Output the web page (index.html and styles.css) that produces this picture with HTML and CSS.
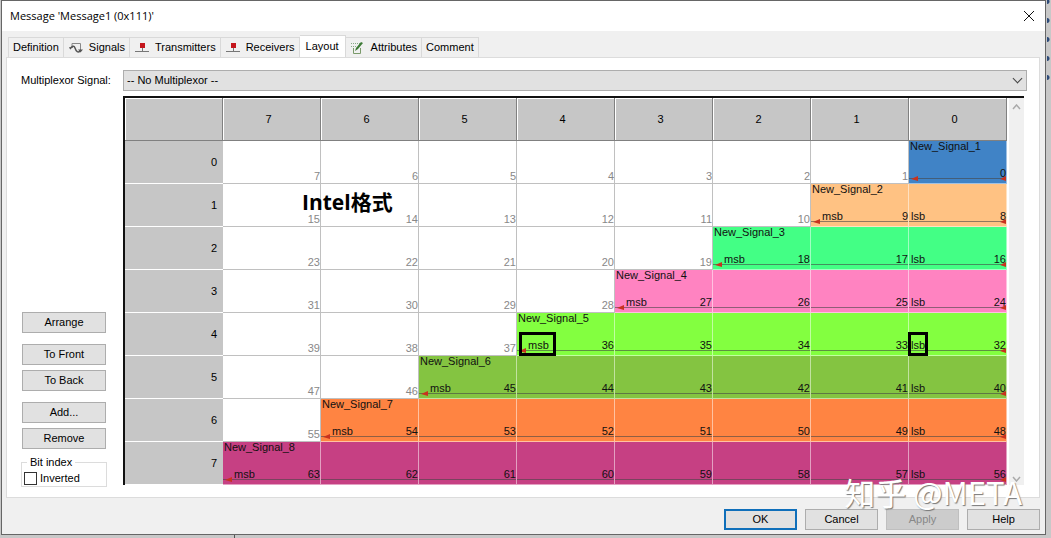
FILE: index.html
```html
<!DOCTYPE html>
<html lang="zh-CN">
  <head>
    <meta charset="utf-8">
    <meta name="viewport" content="width=device-width, initial-scale=1">
    <title>Message 'Message1 (0x111)'</title>
    <link rel="stylesheet" href="styles.css">
  </head>
  <body>
    <div class="dialog">
      <header class="title-bar">
        <h1>Message 'Message1 (0x111)'</h1>
        <button class="close" aria-label="Close">
          <svg width="12" height="12" viewBox="0 0 12 12"><path d="M1 1l10 10M11 1L1 11" stroke="#111" fill="none"/></svg>
        </button>
      </header>
      <nav class="tabs">
        <button class="tab">Definition</button>
        <button class="tab">
          <svg width="16" height="14" viewBox="0 0 16 14" fill="none" stroke="#888"><path d="M4 6V2.500h8.500V9M1 6.500h4"/><path d="M2 8c2-3 4-4 5-1s3 6 6 2" stroke="#555" stroke-width="1.500"/><path d="M10 8.500h5l-2.500 3z" fill="#555" stroke="none"/></svg>
          Signals
        </button>
        <button class="tab">
          <svg width="16" height="14" viewBox="0 0 16 14"><path d="M1 10.500h14M8.500 6v4" stroke="#777"/><path d="M6 2h5v5H6z" fill="#c4161c"/></svg>
          Transmitters
        </button>
        <button class="tab">
          <svg width="16" height="14" viewBox="0 0 16 14"><path d="M1 10.500h14M8.500 6v4" stroke="#777"/><path d="M6 2h5v5H6z" fill="#c4161c"/></svg>
          Receivers
        </button>
        <button class="tab active">Layout</button>
        <button class="tab">
          <svg width="16" height="14" viewBox="0 0 16 14" fill="none"><path d="M1 2.500h9M1 5.500h5" stroke="#8a8" stroke-dasharray="1 1"/><path d="M3.500 7v5.500h7V7" stroke="#7a9a6a"/><path d="M5 10l1-3 5-6 2 1-5 6z" fill="#3c7a35"/></svg>
          Attributes
        </button>
        <button class="tab">Comment</button>
      </nav>
      <main class="pane">
        <div class="mux">
          <label for="mux">Multiplexor Signal:</label>
          <select id="mux"><option>-- No Multiplexor --</option></select>
        </div>
        <div class="content">
          <aside class="tools">
            <div class="tool-group"><button>Arrange</button></div>
            <div class="tool-group"><button>To Front</button><button>To Back</button></div>
            <div class="tool-group"><button>Add...</button><button>Remove</button></div>
            <fieldset>
              <legend>Bit index</legend>
              <label><input type="checkbox"> Inverted</label>
            </fieldset>
          </aside>
          <div class="matrix">
            <table>
              <thead>
                <tr><th></th><th>7</th><th>6</th><th>5</th><th>4</th><th>3</th><th>2</th><th>1</th><th>0</th></tr>
              </thead>
              <tbody id="bits"></tbody>
            </table>
            <div class="scrollbar">
              <svg width="9" height="6" viewBox="0 0 9 6"><path d="M1 5l3.500-4L8 5" stroke="#aaa" stroke-width="1.500" fill="none"/></svg>
              <svg width="9" height="6" viewBox="0 0 9 6"><path d="M1 1l3.500 4L8 1" stroke="#aaa" stroke-width="1.500" fill="none"/></svg>
            </div>
            <div class="note">Intel格式</div>
          </div>
        </div>
      </main>
      <footer class="actions">
        <button class="default">OK</button>
        <button>Cancel</button>
        <button disabled>Apply</button>
        <button>Help</button>
      </footer>
      <div class="watermark">知乎 @META</div>
    </div>
    <script src="layout.js"></script>
  </body>
</html>
```
FILE: styles.css
```css
* {
  box-sizing: border-box;
}

html, body {
  height: 100%;
  margin: 0;
}

body {
  padding: 0 5px 3px 1px;
  background:
    linear-gradient(#555, #555) 234px 100% / 1px 3px no-repeat,
    radial-gradient(circle at 0 50%, #2d4a78 2px, transparent 3px) 100% -8px / 4px 19px repeat-y,
    #c8c8c8;
  color: #000;
  font: 11px/13px "Liberation Sans", "Noto Sans CJK SC", sans-serif;
}

/* the window behind shows dots only beside the upper part */
body::before {
  content: "";
  position: absolute;
  top: 90px;
  right: 0;
  bottom: 0;
  width: 5px;
  background: #c8c8c8;
}

button, select, input {
  margin: 0;
  font: inherit;
  color: inherit;
}

.dialog {
  position: relative;
  display: flex;
  flex-direction: column;
  min-height: 100%;
  border: 1px solid #666;
  background: #f0f0f0;
}

.title-bar {
  display: flex;
  justify-content: space-between;
  align-items: center;
  height: 30px;
  padding: 0 8px;
  background: #fff;
}

.title-bar h1 {
  margin: 0;
  font: 11px/16px "Open Sans", sans-serif;
}

.close {
  display: flex;
  padding: 2px;
  border: 0;
  background: none;
}

.tabs {
  display: flex;
  align-items: flex-end;
  height: 26px;
  margin: 0 6px;
}

.tab {
  display: flex;
  align-items: center;
  gap: 5px;
  height: 20px;
  padding: 0 4px;
  border: 1px solid #d9d9d9;
  border-width: 1px 1px 0 0;
  background: #f0f0f0;
}

.tab:first-child {
  border-left-width: 1px;
}

.tab.active {
  height: 23px;
  margin-bottom: -1px;
  padding: 0 6px 2px;
  background: #fff;
}

.pane {
  flex: 1;
  display: flex;
  flex-direction: column;
  margin: 0 5px 0 4px;
  padding: 12px 12px 10px 14px;
  border: 1px solid #dcdcdc;
  background: #fff;
}

.mux {
  position: relative;
  display: flex;
  align-items: center;
}

.mux label {
  width: 102px;
}

.mux select {
  flex: 1;
  height: 21px;
  padding: 0 3px;
  border: 1px solid #adadad;
  border-radius: 0;
  appearance: none;
  background: #e1e1e1;
}

.mux::after {
  content: "";
  position: absolute;
  right: 6px;
  top: 5px;
  width: 6px;
  height: 6px;
  border: solid #444;
  border-width: 0 1px 1px 0;
  transform: rotate(45deg);
}

.content {
  flex: 1;
  display: flex;
  margin-top: 5px;
}

.tools {
  display: flex;
  flex-direction: column;
  justify-content: flex-end;
  gap: 11px;
  width: 86px;
  margin-right: 16px;
}

.tool-group {
  display: flex;
  flex-direction: column;
  gap: 5px;
  padding: 0 1px;
}

.tool-group button,
.actions button {
  height: 21px;
  padding: 0;
  border: 1px solid #adadad;
  background: #e1e1e1;
}

fieldset {
  margin: -4px 0 0;
  padding: 3px 2px 1px;
  border: 1px solid #dcdcdc;
}

legend {
  margin-left: 3px;
  padding: 0 3px;
}

fieldset label {
  display: flex;
  align-items: center;
  gap: 3px;
}

fieldset input {
  appearance: none;
  width: 13px;
  height: 13px;
  border: 1px solid #333;
  background: #fff;
}

.matrix {
  position: relative;
  flex: 1;
  display: flex;
  align-self: flex-start;
  margin-right: 3px;
  border: solid #111;
  border-width: 2px 0 0 2px;
}

table {
  flex: 1;
  width: 100%;
  table-layout: fixed;
  border-spacing: 0;
}

th, td {
  height: 43px;
  padding: 0;
  font-weight: normal;
}

th {
  padding-right: 6px;
  background: #c6c6c6;
}

thead th {
  border: solid #808080;
  border-width: 0 1px 1px 0;
  box-shadow: inset 1px 1px #fff;
}

tbody th {
  border-bottom: 1px solid #fff;
  text-align: right;
}

td {
  border: solid #c0c0c0;
  border-width: 0 1px 1px 0;
}

.cell {
  display: flex;
  flex-direction: column;
  justify-content: space-between;
  height: 42px;
  padding-bottom: 1px;
  color: #888;
}

.name {
  padding-left: 1px;
  line-height: 10px;
  white-space: nowrap;
}

.bits {
  position: relative;
  display: flex;
  justify-content: space-between;
  line-height: 12px;
}

.number {
  margin-left: auto;
}

.signal {
  border-color: rgba(255, 255, 255, .5);
}

.signal .cell {
  padding-bottom: 4px;
  color: #111;
}

.signal .bits {
  border-bottom: 1px solid rgba(70, 70, 70, .6);
  line-height: 10px;
}

.tag {
  padding-left: 2px;
}

.msb .tag {
  padding-left: 11px;
}

.msb .bits::before,
.lsb .bits::after {
  content: "";
  position: absolute;
  bottom: -3px;
  border: 0 solid transparent;
  border-width: 3px 0 2px;
}

.msb .bits::before {
  left: 2px;
  border-right: 7px solid #c8321e;
}

.lsb .bits::after {
  right: 0;
  border-right: 6px solid #c8321e;
}

.s1 { background: #4083c6; }
.s2 { background: #ffc283; }
.s3 { background: #43ff85; }
.s4 { background: #ff83c1; }
.s5 { background: #83ff40; }
.s6 { background: #84c441; }
.s7 { background: #ff8442; }
.s8 { background: #c64083; }

/* thick boxes around the msb and lsb of one signal */
.mark {
  position: absolute;
  left: 2px;
  bottom: -6px;
  width: 37px;
  height: 24px;
  border: 3px solid #000;
}

.lsb .mark {
  left: -1px;
  width: 20px;
}

.scrollbar {
  display: flex;
  flex-direction: column;
  justify-content: space-between;
  align-items: center;
  flex: none;
  width: 15px;
  margin-left: 2px;
  padding: 6px 0 3px;
  background: #f0f0f0;
}

.note {
  position: absolute;
  left: 177px;
  top: 91px;
  font: bold 21px/26px "Open Sans", "Noto Sans CJK SC", sans-serif;
}

.actions {
  display: flex;
  justify-content: flex-end;
  gap: 8px;
  padding: 11px 5px 4px;
}

.actions button {
  width: 73px;
}

.actions .default {
  border: 2px solid #0f6fba;
}

.actions button:disabled {
  border-color: #bfbfbf;
  background: #ccc;
  color: #888;
}

.watermark {
  position: absolute;
  right: 23px;
  bottom: 22px;
  color: #fff;
  font: 31px/40px "Noto Sans CJK SC", sans-serif;
  text-shadow: 1px 1px 1px #777;
}
```
FILE: layout.js
```js
var tbody = document.getElementById('bits')

function add(parent, tag, className, text) {
  var el = document.createElement(tag)
  el.className = className
  if (text !== undefined) el.textContent = text
  parent.appendChild(el)
  return el
}

for (var row = 0; row < 8; row++) {
  var tr = add(tbody, 'tr', '')
  add(tr, 'th', '', row)
  for (var bit = 7; bit >= 0; bit--) {
    // signal n starts at bit 0 of its byte and is n bits long
    var used = bit <= row
    var msb = used && bit === row
    var lsb = used && bit === 0
    var td = add(tr, 'td', used ? 'signal s' + (row + 1) + (msb ? ' msb' : '') + (lsb ? ' lsb' : '') : '')
    var cell = add(td, 'div', 'cell')
    add(cell, 'div', 'name', msb ? 'New_Signal_' + (row + 1) : '')
    var bits = add(cell, 'div', 'bits')
    if (row > 0 && (msb || lsb)) add(bits, 'span', 'tag', msb ? 'msb' : 'lsb')
    add(bits, 'span', 'number', row * 8 + bit)
    if (row === 4 && (msb || lsb)) add(bits, 'span', 'mark')
  }
}
```
